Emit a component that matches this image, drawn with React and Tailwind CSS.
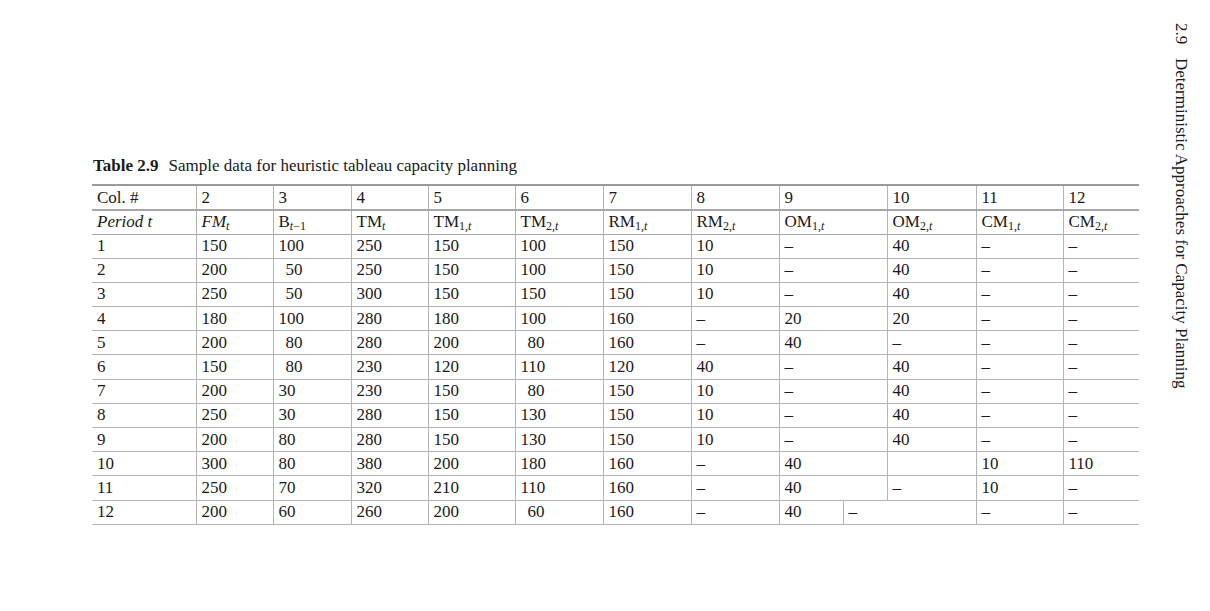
const colWidths = [104, 77, 78, 77, 87, 88, 88, 88, 64, 44, 89, 87, 76];

const D = '–';

// [period, FM, B, TM, TM1, TM2, RM1, RM2, OM1, OM2, CM1, CM2]
const rows = [
  ['1', '150', '100', '250', '150', '100', '150', '10', D, '40', D, D],
  ['2', '200', ' 50', '250', '150', '100', '150', '10', D, '40', D, D],
  ['3', '250', ' 50', '300', '150', '150', '150', '10', D, '40', D, D],
  ['4', '180', '100', '280', '180', '100', '160', D, '20', '20', D, D],
  ['5', '200', ' 80', '280', '200', ' 80', '160', D, '40', D, D, D],
  ['6', '150', ' 80', '230', '120', '110', '120', '40', D, '40', D, D],
  ['7', '200', '30', '230', '150', ' 80', '150', '10', D, '40', D, D],
  ['8', '250', '30', '280', '150', '130', '150', '10', D, '40', D, D],
  ['9', '200', '80', '280', '150', '130', '150', '10', D, '40', D, D],
  ['10', '300', '80', '380', '200', '180', '160', D, '40', '', '10', '110'],
  ['11', '250', '70', '320', '210', '110', '160', D, '40', D, '10', D]
];

const lastRow = ['12', '200', '60', '260', '200', ' 60', '160', D, '40', D, D, D];

function Sub({ n }) {
  return (
    <sub className="text-[12px]">
      {n}
      {n ? ',' : ''}
      <i>t</i>
    </sub>
  );
}

function Val({ v }) {
  if (v.startsWith(' ')) {
    return (
      <>
        <span className="inline-block w-[7px]" />
        {v.trim()}
      </>
    );
  }
  return v;
}

function Cell({ children, first, span }) {
  return (
    <td
      colSpan={span}
      className={`px-[5px] py-0 text-left align-middle whitespace-nowrap ${
        first ? '' : 'border-l-[1.5px] border-l-[#b4b4b4]'
      }`}
    >
      {children}
    </td>
  );
}

export default function App() {
  return (
    <div
      className="w-[1210px] h-[611px] bg-white text-[#1a1a1a] flex overflow-hidden"
      style={{ fontFamily: '"Liberation Serif", "Times New Roman", serif' }}
    >
      <div className="pl-[92px] pt-[156px] w-[1160px]">
        <div className="text-[17px] leading-[20px] pl-[1px] mb-[8px]">
          <span className="font-bold">Table 2.9</span>
          <span className="ml-[10px]">
            Sample data for heuristic tableau capacity planning
          </span>
        </div>
        <table className="table-fixed border-collapse text-[17px] leading-[20px]">
          <colgroup>
            {colWidths.map((w, i) => (
              <col key={i} style={{ width: w }} />
            ))}
          </colgroup>
          <tbody>
            <tr className="h-[25px] border-t-2 border-t-[#9a9a9a] border-b-2 border-b-[#a6a6a6]">
              <Cell first>Col. #</Cell>
              {['2', '3', '4', '5', '6', '7', '8', '9', '10', '11', '12'].map(
                (c) => (
                  <Cell key={c} span={c === '9' ? 2 : undefined}>
                    {c}
                  </Cell>
                )
              )}
            </tr>
            <tr className="h-[24px] border-b-[1.5px] border-b-[#a6a6a6]">
              <Cell first>
                <i>Period t</i>
              </Cell>
              <Cell>
                <i>FM</i>
                <Sub />
              </Cell>
              <Cell>
                B
                <sub className="text-[12px]">
                  <i>t</i>−1
                </sub>
              </Cell>
              <Cell>
                TM
                <Sub />
              </Cell>
              <Cell>
                TM
                <Sub n="1" />
              </Cell>
              <Cell>
                TM
                <Sub n="2" />
              </Cell>
              <Cell>
                RM
                <Sub n="1" />
              </Cell>
              <Cell>
                RM
                <Sub n="2" />
              </Cell>
              <Cell span={2}>
                OM
                <Sub n="1" />
              </Cell>
              <Cell>
                OM
                <Sub n="2" />
              </Cell>
              <Cell>
                CM
                <Sub n="1" />
              </Cell>
              <Cell>
                CM
                <Sub n="2" />
              </Cell>
            </tr>
            {rows.map((r) => (
              <tr
                key={r[0]}
                className="h-[24.2px] border-b-[1.5px] border-b-[#b4b4b4]"
              >
                {r.map((v, i) => (
                  <Cell key={i} first={i === 0} span={i === 8 ? 2 : undefined}>
                    <Val v={v} />
                  </Cell>
                ))}
              </tr>
            ))}
            <tr className="h-[24.2px] border-b-[1.5px] border-b-[#b4b4b4]">
              {lastRow.map((v, i) => (
                <Cell key={i} first={i === 0} span={i === 9 ? 2 : undefined}>
                  <Val v={v} />
                </Cell>
              ))}
            </tr>
          </tbody>
        </table>
      </div>
      <div className="flex-1 pt-[23px] pl-[11px]">
        <div
          className="text-[17px] leading-[20px] whitespace-nowrap flex gap-[14px]"
          style={{ writingMode: 'vertical-rl' }}
        >
          <span>2.9</span>
          <span>Deterministic Approaches for Capacity Planning</span>
        </div>
      </div>
    </div>
  );
}
